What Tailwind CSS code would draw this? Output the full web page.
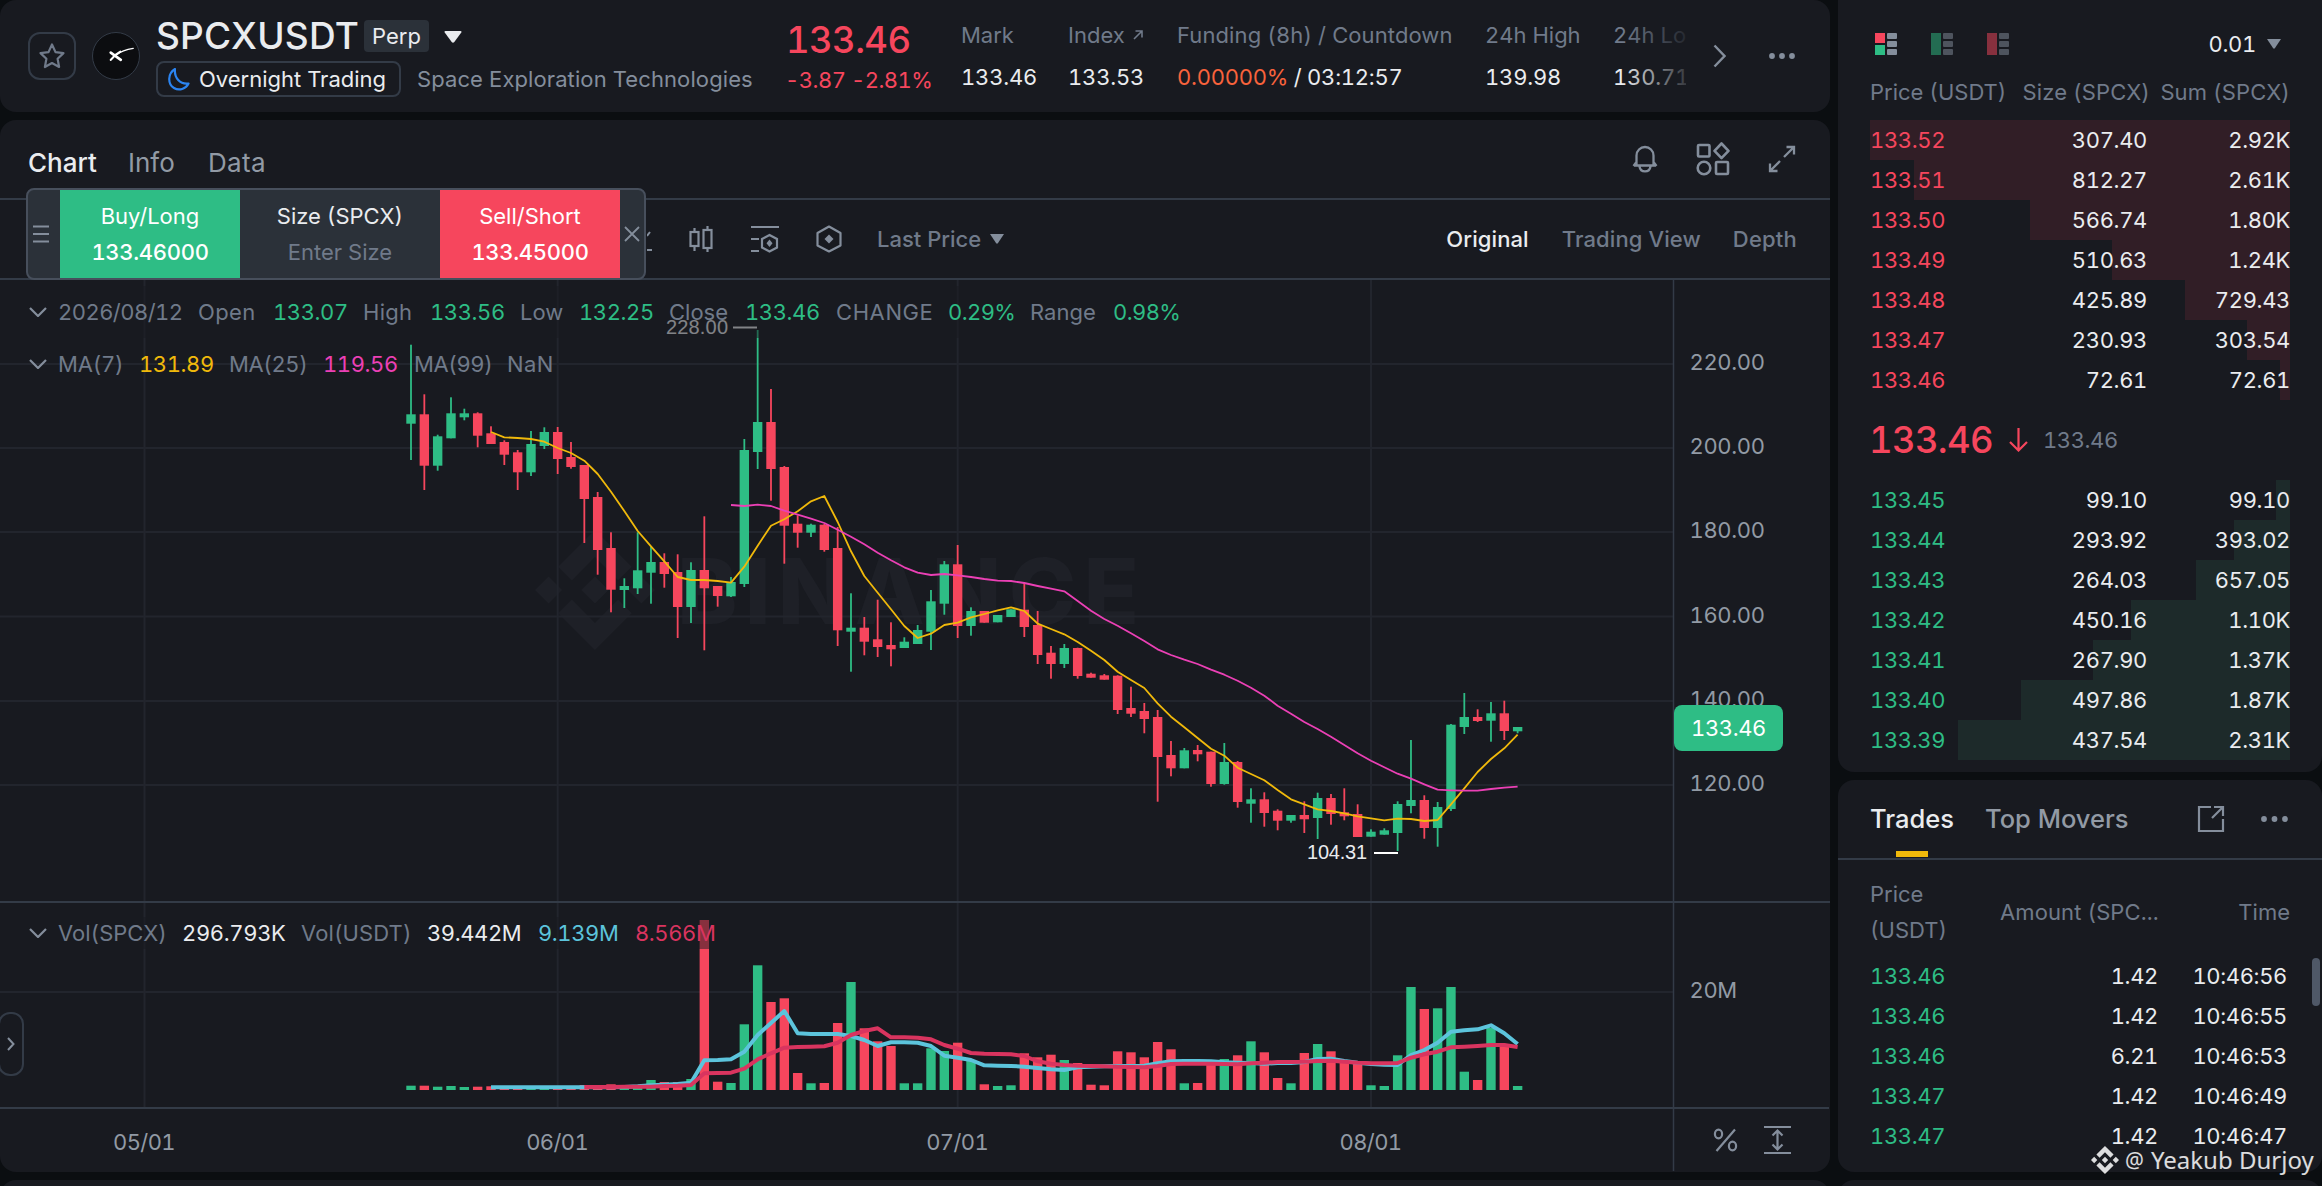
<!DOCTYPE html>
<html lang="en">
<head>
  <meta charset="UTF-8" />
  <meta name="viewport" content="width=device-width, initial-scale=1.0"/>
  <title>SPCXUSDT Perp</title>
  <script src="https://cdn.jsdelivr.net/npm/@tailwindcss/browser@4"></script>
</head>
<body class="bg-[#0b0e11] text-[#eaecef] font-['Inter','Liberation_Sans',sans-serif] text-[22px] leading-9 tabular-nums overflow-hidden">
<div class="relative w-[2322px] h-[1186px] flex gap-2 overflow-hidden">

  <!-- Left column -->
  <div class="w-[1830px] shrink-0 flex flex-col gap-2">

    <!-- Symbol header -->
    <header class="h-28 shrink-0 bg-[#181a20] rounded-2xl flex overflow-hidden">
      <div class="flex items-center pl-7 w-[785px] shrink-0">
        <div class="size-12 shrink-0 rounded-xl border-2 border-[#333b47] flex items-center justify-center">
          <svg class="size-7" viewBox="0 0 28 28" fill="none" stroke="#707a8a" stroke-width="2.2" stroke-linejoin="round"><path d="M14 2.500l3.500 7.600 8 1-5.900 5.700 1.500 8.200-7.100-4-7.100 4 1.500-8.200L2.500 11.100l8-1z"/></svg>
        </div>
        <div class="ml-4 size-12 shrink-0 rounded-full bg-[#0c0d10] border border-[#333b47]">
          <svg viewBox="0 0 48 48" fill="none" stroke="#fff" stroke-linecap="round"><path d="M18.500 20.500l10.500 7.500" stroke-width="2.800"/><path d="M18.500 28c3-4 6-6.500 10-8.500" stroke-width="2.200"/><path d="M24 23c5-4 11-6 18-7" stroke-width="1.300"/></svg>
        </div>
        <div class="ml-4 flex flex-col">
          <div class="flex items-center h-9 mt-[3px]">
            <span class="w-[208px] text-[37px] font-medium tracking-[0.2px]">SPCXUSDT</span>
            <span class="h-8 w-[65px] rounded bg-[#2b3139] text-center leading-8">Perp</span>
            <svg class="ml-[15px] mt-px w-[18px] h-3" viewBox="0 0 18 12" fill="#eaecef"><path d="M1.500 0h15q1.500 0 .8 1.500l-7 9.500q-1.300 1.500-2.600 0l-7-9.500Q0 0 1.500 0z"/></svg>
          </div>
          <div class="flex items-center mt-[7px]">
            <span class="h-9 w-[245px] rounded-lg border-2 border-[#333b47] flex items-center pl-2.5 gap-[9px] leading-8">
              <svg class="w-[22px] h-6 shrink-0" viewBox="0 0 22 24" fill="none" stroke="#2b84f0" stroke-width="2.200" stroke-linejoin="round"><path d="M7 2C-.5 6.500-.5 17 6 21c5 3 12 1 14.500-4.500C12 17.500 6 11 7 2z"/></svg>
              <span class="whitespace-nowrap">Overnight Trading</span>
            </span>
            <span class="ml-4 text-[#848e9c] whitespace-nowrap tracking-[0.1px]">Space Exploration Technologies</span>
          </div>
        </div>
      </div>

      <div class="w-[175px] shrink-0 flex flex-col text-[#f6465d]">
        <div class="mt-[22px] h-9 pl-px text-[36.5px] font-medium tracking-[-0.6px]">133.46</div>
        <div class="mt-1 whitespace-nowrap tracking-[-0.5px]">-3.87 -2.81%</div>
      </div>

      <div class="relative w-[726px] shrink-0 flex overflow-hidden whitespace-nowrap pt-[17px]">
        <div class="w-[108px] pl-px shrink-0"><p class="text-[#707a8a]">Mark</p><p class="mt-1.5 tracking-[-0.2px]">133.46</p></div>
        <div class="w-[109px] shrink-0">
          <p class="text-[#707a8a] flex items-center gap-2">Index <svg class="size-2.5" viewBox="0 0 10 10" fill="none" stroke="#707a8a" stroke-width="1.600"><path d="M1 9l7.500-7.500M2.500 1H9v6.500"/></svg></p>
          <p class="mt-1.5 tracking-[-0.2px]">133.53</p>
        </div>
        <div class="w-[308px] shrink-0"><p class="text-[#707a8a] tracking-[0.1px]">Funding (8h) / Countdown</p><p class="mt-1.5 tracking-[-0.25px]"><span class="text-[#f8633c]">0.00000%</span> / 03:12:57</p></div>
        <div class="w-[128px] shrink-0"><p class="text-[#707a8a]">24h High</p><p class="mt-1.5 tracking-[-0.2px]">139.98</p></div>
        <div class="w-[73px] shrink-0 overflow-hidden"><p class="text-[#707a8a]">24h Low</p><p class="mt-1.5 tracking-[-0.2px]">130.71</p></div>
        <div class="absolute right-0 top-0 h-28 w-[64px] bg-gradient-to-r from-[#181a20]/0 to-[#181a20]/85"></div>
      </div>

      <div class="flex items-center gap-[43px] pl-[27px]">
        <svg class="w-[13px] h-6" viewBox="0 0 13 24" fill="none" stroke="#848e9c" stroke-width="2.400"><path d="M1.500 1.500L11.500 12l-10 10.500"/></svg>
        <svg class="w-[26px] h-2" viewBox="0 0 26 8" fill="#848e9c"><circle cx="3" cy="4" r="2.900"/><circle cx="13" cy="4" r="2.900"/><circle cx="23" cy="4" r="2.900"/></svg>
      </div>
    </header>

    <!-- Chart panel -->
    <main class="relative h-[1052px] shrink-0 bg-[#181a20] rounded-2xl overflow-hidden">
      <div class="h-20 border-b-2 border-[#333b47] flex items-center px-7 pt-2 text-[26px] font-medium text-[#929aa5]">
        <span class="w-[100px] text-[#eaecef]">Chart</span>
        <span class="w-[80px] font-normal">Info</span>
        <span class="font-normal tracking-[0.3px]">Data</span>
        <div class="ml-auto mr-1.5 -mt-3 pt-1 flex items-center gap-[38px]">
          <svg class="w-[26px] h-7" viewBox="0 0 26 28" fill="none" stroke="#848e9c" stroke-width="2.300" stroke-linejoin="round"><path d="M4.500 20V10.500a8.500 8.500 0 0117 0V20M2 20.500h22M1.500 21l3-4M24.500 21l-3-4M7.500 21.500c1 6.500 10 6.500 11 0"/></svg>
          <svg class="size-[34px]" viewBox="0 0 34 34" fill="none" stroke="#848e9c" stroke-width="2.600" stroke-linejoin="round"><rect x="2" y="3" width="11.500" height="11.500" rx="1"/><path d="M25.500 1.500l7 7.300-7 7.300-7-7.300z"/><circle cx="8" cy="26" r="6.300"/><rect x="20" y="20" width="12" height="12" rx="1"/></svg>
          <svg class="w-7 h-[28px]" viewBox="0 0 28 28" fill="none" stroke="#848e9c" stroke-width="2.300"><path d="M16 12L26 2M18.500 2H26v7.500M12 16L2 26M2 18.500V26h7.500"/></svg>
        </div>
      </div>

      <div class="h-20 border-b-2 border-[#333b47] flex items-center pl-[647px] pr-[33px] font-medium text-[#707a8a]">
        <svg class="w-[5px] h-7 mt-1" viewBox="0 0 5 28" fill="none" stroke="#848e9c" stroke-width="2"><path d="M0 9l3-4M0 23h5"/></svg>
        <svg class="ml-[37px] w-6 h-7" viewBox="0 0 24 28" fill="none" stroke="#848e9c" stroke-width="2.200"><path d="M5.500 3v4M5.500 21v5M18.500 1v4M18.500 23v4"/><rect x="1.500" y="7" width="8" height="14"/><rect x="14.500" y="5" width="8" height="18"/></svg>
        <svg class="ml-[38px] w-7 h-7" viewBox="0 0 28 28" fill="none" stroke="#848e9c" stroke-width="2.200"><path d="M0 2h28M0 14h8M0 26h8M18.500 10l7.500 4v8.500l-7.500 4-7.500-4V14z"/><path d="M18.500 14.500l3 3.700-3 3.700-3-3.700z" fill="#848e9c" stroke="none"/></svg>
        <svg class="ml-[37px] w-[26px] h-7" viewBox="0 0 26 28" fill="none" stroke="#848e9c" stroke-width="2.200" stroke-linejoin="round"><path d="M13 1.500L24.500 8v12.500L13 26.500 1.500 20.500V8z"/><path d="M13 9.500l4.500 4.500-4.500 4.500L8.500 14z" fill="#848e9c" stroke="none"/></svg>
        <span class="ml-[35px]">Last Price</span>
        <svg class="ml-[9px] w-3.5 h-2.5" viewBox="0 0 14 10" fill="#848e9c"><path d="M0 0h14L8 9q-1 1.500-2 0z"/></svg>
        <span class="ml-auto text-[#eaecef] tracking-[0.1px]">Original</span>
        <span class="ml-[33px] tracking-[0.1px]">Trading View</span>
        <span class="ml-8 tracking-[0.2px]">Depth</span>
      </div>

      <!-- Price and volume chart, drawn in page coordinates -->
      <div class="relative">
        <svg id="chart" class="block w-[1830px] h-[892px] font-['Inter','Liberation_Sans',sans-serif]" viewBox="0 280 1830 892"></svg>

        <div class="absolute left-0 top-[6px] h-[52px] w-[1190px] bg-[#181a20]/50 flex items-center pl-[29px] text-[#707a8a] whitespace-nowrap">
          <svg class="w-[18px] h-2.5 mr-[11px] shrink-0" viewBox="0 0 18 10" fill="none" stroke="#848e9c" stroke-width="2.200"><path d="M1 1l8 8 8-8"/></svg>
          <span class="w-[140px] shrink-0 tracking-[-0.55px]">2026/08/12</span>
          <span class="w-[75px] shrink-0 tracking-[0.4px]">Open</span><span class="w-[90px] shrink-0 text-[#2ebd85] tracking-[-0.4px]">133.07</span>
          <span class="w-[67px] shrink-0 tracking-[0.3px]">High</span><span class="w-[90px] shrink-0 text-[#2ebd85] tracking-[-0.4px]">133.56</span>
          <span class="w-[59px] shrink-0">Low</span><span class="w-[90px] shrink-0 text-[#2ebd85] tracking-[-0.4px]">132.25</span>
          <span class="w-[76px] shrink-0">Close</span><span class="w-[91px] shrink-0 text-[#2ebd85] tracking-[-0.4px]">133.46</span>
          <span class="w-[112px] shrink-0 tracking-[0.6px]">CHANGE</span><span class="w-[82px] shrink-0 text-[#2ebd85] tracking-[-0.6px]">0.29%</span>
          <span class="w-[83px] shrink-0">Range</span><span class="text-[#2ebd85] tracking-[-0.6px]">0.98%</span>
        </div>
        <div class="absolute left-0 top-[66px] h-9 flex items-center pl-[29px] text-[#707a8a] whitespace-nowrap">
          <svg class="w-[18px] h-2.5 mr-[11px] shrink-0" viewBox="0 0 18 10" fill="none" stroke="#848e9c" stroke-width="2.200"><path d="M1 1l8 8 8-8"/></svg>
          <span class="w-[81px] tracking-[-0.2px]">MA(7)</span><span class="w-[90px] text-[#f0b90b] tracking-[-0.4px]">131.89</span>
          <span class="w-[94px] tracking-[-0.4px]">MA(25)</span><span class="w-[91px] text-[#eb40b5] tracking-[-0.4px]">119.56</span>
          <span class="w-[93px] tracking-[-0.4px]">MA(99)</span><span class="tracking-[0.4px]">NaN</span>
        </div>
        <div class="absolute left-0 top-[637px] h-8 w-[720px] bg-[#181a20]/50 flex items-center pl-[29px] text-[#707a8a] whitespace-nowrap">
          <svg class="w-[18px] h-2.5 mr-[11px] shrink-0" viewBox="0 0 18 10" fill="none" stroke="#848e9c" stroke-width="2.200"><path d="M1 1l8 8 8-8"/></svg>
          <span class="w-[124px] shrink-0">Vol(SPCX)</span><span class="w-[119px] shrink-0 text-[#eaecef] tracking-[-0.35px]">296.793K</span>
          <span class="w-[126px] shrink-0 tracking-[0.1px]">Vol(USDT)</span><span class="w-[111px] shrink-0 text-[#eaecef] tracking-[-0.4px]">39.442M</span>
          <span class="w-[97px] shrink-0 text-[#5cc4dc] tracking-[-0.4px]">9.139M</span><span class="text-[#d9345f] tracking-[-0.4px]">8.566M</span>
        </div>
        <div class="absolute left-[1674px] top-[425px] w-[109px] h-[46px] rounded-lg bg-[#2ebd85] text-white text-center leading-[46px] tracking-[-0.4px]">133.46</div>
        <div class="absolute left-[-2px] top-[732px] w-[26px] h-16 rounded-xl border-2 border-[#333b47] bg-[#181a20] flex items-center justify-center">
          <svg class="w-2 h-3.5" viewBox="0 0 8 14" fill="none" stroke="#848e9c" stroke-width="2"><path d="M1 1l5.500 6L1 13"/></svg>
        </div>
      </div>

      <!-- Floating quick order box -->
      <div class="absolute left-[26px] top-[68px] w-[620px] h-[92px] rounded-lg border-2 border-[#474f5c] bg-[#2b3139] flex text-center overflow-hidden">
        <div class="w-8 shrink-0 flex items-center justify-center pr-1.5"><svg class="w-4 h-[18px]" viewBox="0 0 16 18" stroke="#848e9c" stroke-width="2"><path d="M0 1.500h16M0 9h16M0 16.500h16"/></svg></div>
        <div class="w-[180px] shrink-0 bg-[#2ebd85] text-white pt-2"><p>Buy/Long</p><p class="font-medium tracking-[-0.3px]">133.46000</p></div>
        <div class="w-[200px] shrink-0 pt-2"><p>Size (SPCX)</p><p class="text-[#707a8a]">Enter Size</p></div>
        <div class="w-[180px] shrink-0 bg-[#f6465d] text-white pt-2"><p>Sell/Short</p><p class="font-medium tracking-[-0.3px]">133.45000</p></div>
        <div class="flex-1 flex items-center justify-center"><svg class="size-4" viewBox="0 0 16 16" stroke="#848e9c" stroke-width="1.800"><path d="M1 1l14 14M15 1L1 15"/></svg></div>
      </div>
    </main>
    <div class="h-10 shrink-0 bg-[#181a20] rounded-2xl"></div>
  </div>

  <!-- Right column -->
  <div class="w-[484px] shrink-0 flex flex-col gap-2">

    <!-- Order book -->
    <section class="h-[772px] shrink-0 bg-[#181a20] rounded-b-2xl px-8">
      <div class="h-[74px] flex items-center gap-[34px] pl-[5px] pr-[9px] pt-3.5">
        <svg class="w-[22px] h-[22px]" viewBox="0 0 22 22" fill="#848e9c"><path fill="#f6465d" d="M0 0h10v10H0z"/><path fill="#2ebd85" d="M0 12h10v10H0z"/><rect x="12" width="10" height="6" rx="1"/><rect x="12" y="8" width="10" height="6" rx="1"/><rect x="12" y="16" width="10" height="6" rx="1"/></svg>
        <svg class="w-[22px] h-[22px] opacity-50" viewBox="0 0 22 22" fill="#848e9c"><path fill="#2ebd85" d="M0 0h10v22H0z"/><rect x="12" width="10" height="6" rx="1"/><rect x="12" y="8" width="10" height="6" rx="1"/><rect x="12" y="16" width="10" height="6" rx="1"/></svg>
        <svg class="w-[22px] h-[22px] opacity-50" viewBox="0 0 22 22" fill="#848e9c"><path fill="#f6465d" d="M0 0h10v22H0z"/><rect x="12" width="10" height="6" rx="1"/><rect x="12" y="8" width="10" height="6" rx="1"/><rect x="12" y="16" width="10" height="6" rx="1"/></svg>
        <div class="ml-auto flex items-center gap-[11px] tracking-[-0.3px]">0.01
          <svg class="w-3.5 h-2.5" viewBox="0 0 14 10" fill="#848e9c"><path d="M0 0h14L8 9q-1 1.500-2 0z"/></svg>
        </div>
      </div>
      <div class="h-[46px] grid grid-cols-[140px_140px_140px] text-[#707a8a] whitespace-nowrap">
        <span>Price (USDT)</span><span class="text-right tracking-[0.1px]">Size (SPCX)</span><span class="text-right tracking-[0.1px]">Sum (SPCX)</span>
      </div>
      <div id="asks" class="h-[280px] w-[420px]"></div>
      <div class="h-20 flex items-center">
        <span class="w-[139px] -ml-px mr-px text-[36.5px] font-medium text-[#f6465d] tracking-[-0.7px]">133.46</span>
        <svg class="w-[19px] h-6 mr-[15px]" viewBox="0 0 19 24" fill="none" stroke="#f6465d" stroke-width="2.200"><path d="M9.500 0v22M1 14l8.500 8.500L18 14"/></svg>
        <span class="text-[#707a8a] tracking-[-0.4px]">133.46</span>
      </div>
      <div id="bids" class="h-[280px] w-[420px]"></div>
    </section>

    <!-- Trades -->
    <section class="relative h-[392px] shrink-0 bg-[#181a20] rounded-2xl overflow-hidden">
      <div class="relative h-20 border-b-2 border-[#333b47] flex items-center px-8 text-[25.5px] font-medium text-[#929aa5]">
        <span class="w-[115px] text-[#eaecef]">Trades</span><span>Top Movers</span>
        <svg class="ml-auto w-7 h-7" viewBox="0 0 28 28" fill="none" stroke="#848e9c" stroke-width="2.200"><path d="M14 2H2v24h24V14M17 2h9v9M25.500 2.500L15 13"/></svg>
        <svg class="ml-9 mr-[2px] w-[27px] h-2" viewBox="0 0 27 8" fill="#848e9c"><circle cx="3" cy="4" r="2.900"/><circle cx="13.500" cy="4" r="2.900"/><circle cx="24" cy="4" r="2.900"/></svg>
        <div class="absolute left-[58px] bottom-px w-8 h-1.5 bg-[#f0b90b]"></div>
      </div>
      <div class="h-[96px] mt-4 px-8 flex text-[#707a8a] whitespace-nowrap">
        <span class="w-[130px]">Price<br>(USDT)</span>
        <span class="w-[158px] mt-[18px] text-right tracking-[0.1px]">Amount (SPC...</span>
        <span class="flex-1 mt-[18px] text-right">Time</span>
      </div>
      <div id="trades" class="-mt-4"></div>
      <div class="absolute right-0.5 top-[178px] w-2 h-12 rounded bg-[#4f5867]"></div>
    </section>
    <div class="h-10 shrink-0 bg-[#181a20] rounded-2xl"></div>
  </div>

  <!-- Author tag -->
  <div class="absolute left-[2091px] top-[1142px] flex items-center h-9 text-white/85 whitespace-nowrap font-['Noto_Sans',sans-serif] text-[24px]">
    <svg class="size-[28px] mr-1.5" viewBox="0 0 24 24" fill="currentColor"><path d="M16.624 13.9202l2.7175 2.7154-7.353 7.353-7.353-7.352 2.7175-2.7164 4.6355 4.6595 4.6356-4.6595zm4.6366-4.6366L24 12l-2.7154 2.7164L18.5682 12l2.6924-2.7164zm-9.272.001l2.7163 2.6914-2.7164 2.7174v-.001L9.2721 12l2.7164-2.7154zm-9.2722-.001L5.4088 12l-2.6914 2.6924L0 12l2.7164-2.7164zM11.9885.0115l7.353 7.329-2.7174 2.7154-4.6356-4.6356-4.6355 4.6595-2.7174-2.7154 7.353-7.353z"/></svg>
    <span class="text-[21px] mr-[7px]">@</span>Yeakub Durjoy
  </div>
</div>

<script>
  const UP = '#2ebd85', DOWN = '#f6465d';

  // color, high, body top, body bottom, low, volume top
  const candles = [
    ['u',344.7,414.3,423.7,460,1085.7],['d',394.3,414.3,465.7,490,1085.7],['u',434.7,436.3,465.7,470.7,1086.7],['u',397.3,413.3,438.3,438.3,1086],
    ['u',408.7,413.3,417.3,420.3,1087],['d',412.3,413.3,435.7,447.3,1086.7],['d',426.3,433.3,444,444,1086.3],['d',440.3,442,454.7,465,1087],
    ['d',450,452.3,472.3,490,1087],['u',431,444,472.3,476,1086.7],['u',427.3,432,446,449,1087],['d',427,432,459,474,1087],
    ['d',442,457,467,468.7,1087],['d',465,465,499,543,1085],['d',492,497,550,574.7,1085.7],['d',532.3,548,589.7,612.3,1084.3],
    ['u',578.3,586,590,608,1087],['u',532.3,570.3,588.3,594,1085.7],['u',546.7,562,572.7,603.7,1080],['d',553.3,562,574,587.7,1082],
    ['d',554.3,572,607,638,1082],['u',562.3,570,607,623,1079],['d',516.3,570,588.3,650.3,920],['d',586,586,596,606.7,1081.7],
    ['u',577,582,596.3,597,1083],['u',439,450,584,587,1024.3],['u',330,422,452,469,965.3],['d',389,422,469,500.7,1002],
    ['d',466,467,525.7,563.7,998.3],['d',515.3,523.7,532.7,547.7,1073],['u',523.7,524.7,532.7,537,1083.3],['d',524,524.7,550,551.7,1083],
    ['d',527,548,630.3,646,1023],['u',593.3,627.7,631.7,671.7,982],['d',617,627.7,641.7,655.3,1028.3],['d',599.7,639.3,647,657,1041.3],
    ['d',622.3,645,649.3,666.3,1046],['u',637.3,641.7,648,648,1083.3],['u',625,630,644,644,1083.3],['u',590,601.3,631.7,650,1048.3],
    ['u',561,564.3,603.7,614.7,1051],['d',545,564.3,626,638,1042.7],['u',607.3,611,626,635.7,1060],['d',611,611,622.7,622.7,1084.3],
    ['u',615,615,622.3,622.3,1086],['u',609.3,609.3,617,617,1085.3],['d',583,609.7,627,637,1053.3],['d',611,625,655,664,1057.3],
    ['d',646,652.7,664,678.7,1054.7],['u',644,648,664,668,1060],['d',647.7,648,676,678.7,1063],['d',672.7,673.7,677.7,677.7,1084.7],
    ['d',674,675.3,679.7,679.7,1085.3],['d',675.3,675.7,710,714,1051.3],['d',686.7,708,713.7,717,1052.3],['d',703,711,719,733.3,1057.3],
    ['d',710,717,757,801.7,1042],['d',741,755,768.3,776.3,1049.3],['u',748,750.3,768.3,768.3,1083.3],['d',745,750,754.3,761.3,1083],
    ['d',751.7,751.7,784,786.7,1065],['u',743,762,784,784.7,1059],['d',761,762,802,807.7,1055.3],['u',788.3,799.3,803.7,822.7,1041.3],
    ['d',792.3,799.3,813,826.7,1052.3],['d',809.3,810.7,820.7,830.3,1078],['u',815,815,820.7,822.7,1083.3],['d',801.3,815,819.3,833,1053],
    ['u',792.7,798,818,839,1044],['d',794,798,814,824.7,1051.3],['d',788.3,812.3,816.3,820.3,1062.3],['d',804.3,814,837,837,1063],
    ['u',829.3,831.7,836.7,836.7,1085.3],['u',828.3,830.3,834.7,834.7,1086],['u',801.3,804,833,851,1055.3],['u',740,800,806,813.3,987],
    ['d',795.3,800,828,838.7,1009],['u',802,807,828,846.7,1008.3],['u',724,724.7,809,811,987],['u',693,717,727,734,1071.7],
    ['d',709.3,717,721,722,1080],['u',702,713.3,720.7,741.7,1028],['d',700.7,713.3,731,740,1046.7],['u',727,727,731.3,733.3,1086]
  ];

  // line values are thirds of a pixel below each line's own origin
  const ma7a = [366,382,384,387,395,414,429,452,492,545,603,663,709,754,801,810,810,813,818,770,707,647,628,604,574,558,636,724,798,848,898,948,984,971,945,938,922,912,901,892,903,941,957,973,996,1022,1050];
  const ma7b = [335,360,384,430,470,502,534,566,587,623,642,661,690,718,733,748,753,760,769,775,781,776,777,783,780,733,685,636,597,565,524];
  const ma25a = [585,588,584,588,602,614,626,639,659,680,703,728,751,772,788,795,792,796,801,807,812,813,819,828,836,844,873,902,927];
  const ma25b = [197,220,243,268,285,299,312,329,344,362,383,407,437,461,486,507,530,555,580,602,622,641,656,673,689,691,692,692,687,683,680];
  const volFast = [562,562,562,562,562,562,562,562,562,562,561,559,556,554,552,548,481,480,478,455,405,369,333,400,402,402,402,408,420,438,427,427,428,438,467,473,480,496,497,498,500,504,508,510,502,500,499,498,498,497,490,484,483,483,484,487,488,489,491,489,489,486,477,476,483,488,492,494,495,465,450,428,395,391,388,376,400,432];
  const volSlow = [561,561,561,560,560,560,558,557,555,520,519,518,506,478,460,443,441,440,439,428,405,393,385,412,412,413,418,435,446,459,461,462,463,468,484,491,495,497,498,499,500,501,502,498,492,491,491,491,492,493,490,488,486,486,485,483,482,485,488,490,490,489,473,463,455,442,440,438,435,435,441];

  const x = i => 411 + i * 13.333;
  const line = (parts, color, width) => {
    const pts = parts.flatMap(([start, top, arr]) => arr.map((v, k) => `${x(start + k).toFixed(1)},${(top + v / 3).toFixed(1)}`));
    return `<polyline points="${pts.join(' ')}" fill="none" stroke="${color}" stroke-width="${width}" stroke-linejoin="round"/>`;
  };

  let svg = '';
  // watermark
  svg += `<g fill="#1e2027"><path transform="translate(535 530) scale(5)" d="M16.624 13.9202l2.7175 2.7154-7.353 7.353-7.353-7.352 2.7175-2.7164 4.6355 4.6595 4.6356-4.6595zm4.6366-4.6366L24 12l-2.7154 2.7164L18.5682 12l2.6924-2.7164zm-9.272.001l2.7163 2.6914-2.7164 2.7174v-.001L9.2721 12l2.7164-2.7154zm-9.2722-.001L5.4088 12l-2.6914 2.6924L0 12l2.7164-2.7164zM11.9885.0115l7.353 7.329-2.7174 2.7154-4.6356-4.6356-4.6355 4.6595-2.7174-2.7154 7.353-7.353z"/><text x="677" y="623.500" font-size="91" font-weight="800" textLength="462">BINANCE</text></g>`;
  // grid
  [[364,'220.00'],[448,'200.00'],[532,'180.00'],[616.5,'160.00'],[701,'140.00'],[785,'120.00'],[992,'20M']].forEach(([y, label]) => {
    svg += `<path d="M0 ${y}H1673" stroke="#22252d" stroke-width="2"/><text x="1689.500" y="${y + 6}" font-size="22" letter-spacing="-0.35" fill="#929aa5">${label}</text>`;
  });
  [[144.5,'05/01'],[557.7,'06/01'],[957.7,'07/01'],[1371,'08/01']].forEach(([gx, label]) => {
    svg += `<path d="M${gx} 280V1107" stroke="#22252d" stroke-width="2"/><text x="${gx - 0.5}" y="1150" font-size="22" letter-spacing="-0.6" text-anchor="middle" fill="#929aa5">${label}</text>`;
  });
  svg += `<path d="M0 902H1830M0 1108H1829" stroke="#333b47" stroke-width="2"/><path d="M1673.500 280V1171" stroke="#333b47" stroke-width="1.500"/>`;

  candles.forEach(([c, h, t, b, l, v], i) => {
    const f = c === 'u' ? UP : DOWN;
    svg += `<rect x="${x(i) - 0.9}" y="${h}" width="1.8" height="${l - h}" fill="${f}"/><rect x="${x(i) - 4.7}" y="${t}" width="9.4" height="${b - t}" fill="${f}"/>`;
    svg += `<rect x="${x(i) - 4.7}" y="${v}" width="9.4" height="${1090 - v}" fill="${f}"/>`;
  });
  svg += line([[6, 310, ma7a], [53, 560, ma7b]], '#f0b90b', 1.8);
  svg += line([[24, 310, ma25a], [53, 560, ma25b]], '#eb40b5', 1.8);
  svg += line([[6, 900, volFast]], '#5cc4dc', 4);
  svg += line([[13, 900, volSlow]], '#d9345f', 4);

  // extremes
  svg += `<g font-size="20" font-family="Liberation Sans"><text x="666" y="334" fill="#eaecef" textLength="62">228.00</text><path d="M733 327.500H757" stroke="#eaecef" stroke-width="2"/><text x="1307" y="859" fill="#eaecef" textLength="60">104.31</text><path d="M1374 853H1398" stroke="#fff" stroke-width="2"/></g>`;
  // axis tools
  svg += `<g fill="none" stroke="#848e9c" stroke-width="2.200"><ellipse cx="1718.500" cy="1134" rx="3.600" ry="4.400"/><ellipse cx="1732.500" cy="1146" rx="3.600" ry="4.400"/><path d="M1735 1129.500L1716.500 1151M1764 1127H1791M1764 1153H1791M1777.500 1131V1149M1772.500 1135.500l5-5 5 5M1772.500 1144.500l5 5 5-5"/></g>`;
  document.getElementById('chart').innerHTML = svg;

  // order book rows: price, size, sum, depth bar width
  const asks = [['133.52','307.40','2.92K',420],['133.51','812.27','2.61K',376],['133.50','566.74','1.80K',260],['133.49','510.63','1.24K',178],['133.48','425.89','729.43',105],['133.47','230.93','303.54',43],['133.46','72.61','72.61',10]];
  const bids = [['133.45','99.10','99.10',14],['133.44','293.92','393.02',56],['133.43','264.03','657.05',94],['133.42','450.16','1.10K',159],['133.41','267.90','1.37K',197],['133.40','497.86','1.87K',269],['133.39','437.54','2.31K',332]];
  const book = (rows, text, bar) => rows.map(r => `
    <div class="relative h-10 flex items-center tracking-[-0.35px]">
      <div class="absolute right-0 inset-y-0 ${bar}" style="width:${r[3]}px"></div>
      <span class="relative w-[127px] ${text}">${r[0]}</span>
      <span class="relative w-[150px] text-right">${r[1]}</span>
      <span class="relative flex-1 text-right">${r[2]}</span>
    </div>`).join('');
  document.getElementById('asks').innerHTML = book(asks, 'text-[#f6465d]', 'bg-[#311e26]');
  document.getElementById('bids').innerHTML = book(bids, 'text-[#2ebd85]', 'bg-[#1d2a2a]');

  const trades = [['133.46','1.42','10:46:56'],['133.46','1.42','10:46:55'],['133.46','6.21','10:46:53'],['133.47','1.42','10:46:49'],['133.47','1.42','10:46:47']];
  document.getElementById('trades').innerHTML = trades.map(t => `
    <div class="h-10 flex items-center px-8 tracking-[-0.35px]">
      <span class="w-[128px] text-[#2ebd85]">${t[0]}</span>
      <span class="w-[160px] text-right">${t[1]}</span>
      <span class="flex-1 text-right pr-[3px]">${t[2]}</span>
    </div>`).join('');
</script>
</body>
</html>
